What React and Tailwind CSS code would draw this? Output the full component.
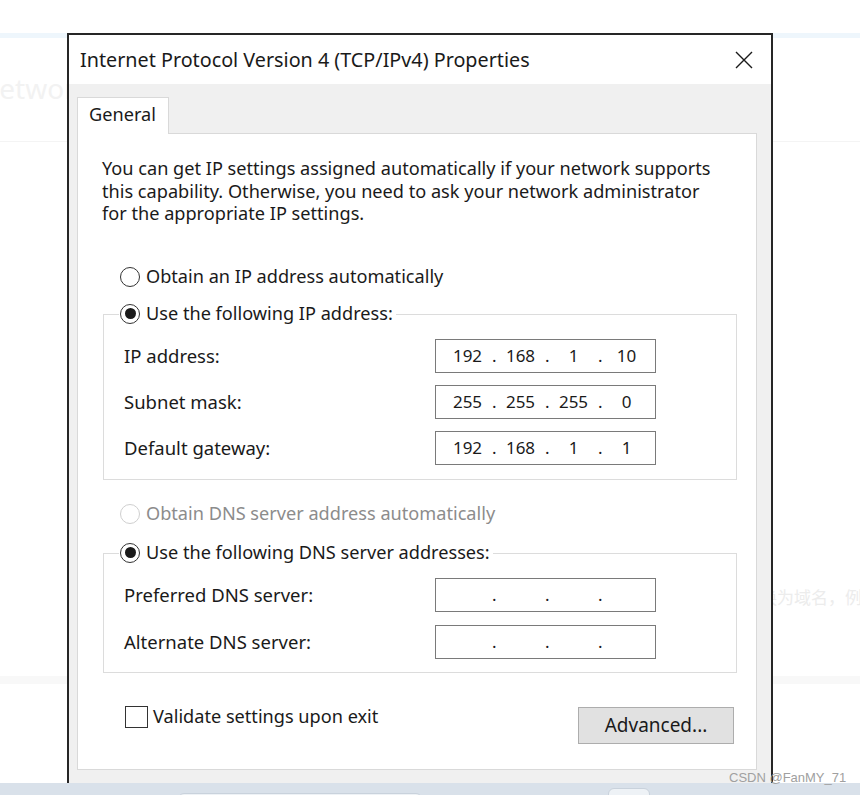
import React from "react";

function Radio({ checked, disabled }) {
  return (
    <span
      className={
        "flex h-[20px] w-[20px] shrink-0 items-center justify-center rounded-full border bg-white " +
        (disabled ? "border-[#cfcfcf]" : "border-[#333333]")
      }
    >
      {checked ? <span className="h-[11px] w-[11px] rounded-full bg-[#1a1a1a]" /> : null}
    </span>
  );
}

function IpBox({ parts }) {
  const p = parts || ["", "", "", ""];
  return (
    <div className="flex h-[34px] w-[221px] items-center border border-[#7a7a7a] bg-white pl-[7px] text-[17px]">
      <span className="w-[49px] text-center">{p[0]}</span>
      <span className="w-[4px] text-center">.</span>
      <span className="w-[49px] text-center">{p[1]}</span>
      <span className="w-[4px] text-center">.</span>
      <span className="w-[49px] text-center">{p[2]}</span>
      <span className="w-[4px] text-center">.</span>
      <span className="w-[49px] text-center">{p[3]}</span>
    </div>
  );
}

function Row({ label, parts }) {
  return (
    <div className="flex items-center pl-[20px]">
      <span className="w-[311px] text-[18.5px]">{label}</span>
      <IpBox parts={parts} />
    </div>
  );
}

function Group({ legend, children, className }) {
  return (
    <div className={"ml-[25px] w-[634px] border border-[#dcdcdc] " + (className || "")}>
      <div className="-mt-[13px] ml-[15px] flex h-[24px] w-fit items-center gap-[6px] bg-white pr-[3px] pl-[1px]">
        <Radio checked />
        <span>{legend}</span>
      </div>
      {children}
    </div>
  );
}

export default function App() {
  return (
    <div className="relative h-[795px] w-[860px] overflow-hidden bg-white font-['Noto_Sans',sans-serif] text-[#1a1a1a]">
      {/* background page */}
      <div className="flex h-full flex-col">
        <div className="h-[33px]" />
        <div className="h-[5px] bg-[#eef6fc]" />
        <div className="h-[32px]" />
        <div className="-ml-[22px] text-[28px] leading-[36px] text-[#f2f2f2]">Network</div>
        <div className="mt-[35px] h-px bg-[#f4f4f4]" />
        <div className="ml-[760px] mt-[443px] whitespace-nowrap font-['Noto_Sans_CJK_SC',sans-serif] text-[17px] leading-[24px] text-[#ececec]">
          换为域名，例如
        </div>
        <div className="mt-[67px] h-[8px] bg-[#f8f8f8]" />
        <div className="relative mt-auto h-[12px] bg-[#d9e1ea]">
          <div className="absolute left-[178px] top-[10px] h-[10px] w-[244px] rounded-t-[6px] border border-[#c9d2dc] bg-[#eef2f6]" />
          <div className="absolute left-[608px] top-[5px] h-[14px] w-[42px] rounded-t-[6px] border border-[#c9d2dc] bg-[#eef2f6]" />
        </div>
      </div>

      {/* dialog window */}
      <div className="absolute left-[67px] top-[33px] flex h-[750px] w-[706px] flex-col border-2 border-b-0 border-[#262626] bg-[#f0f0f0] text-[18.15px]">
        <div className="flex h-[49px] shrink-0 items-center justify-between bg-white pl-[11px] pr-[18px]">
          <span className="text-[19.75px]">Internet Protocol Version 4 (TCP/IPv4) Properties</span>
          <svg width="18" height="18" viewBox="0 0 18 18" className="mt-[1px]">
            <path d="M1 1 L17 17 M17 1 L1 17" stroke="#1a1a1a" strokeWidth="1.4" fill="none" />
          </svg>
        </div>
        <div className="flex flex-1 flex-col pl-[8px] pr-[14px] pt-[13px]">
          <div className="relative z-10 -mb-px flex h-[37px] w-[92px] items-center border border-b-0 border-[#d9d9d9] bg-white pl-[11px] pb-[2px]">
            General
          </div>
          <div className="flex flex-col border border-[#d9d9d9] bg-white pb-[25px]">
            <p className="pl-[24px] pt-[23px] leading-[22.5px]">
              You can get IP settings assigned automatically if your network supports
              <br />
              this capability. Otherwise, you need to ask your network administrator
              <br />
              for the appropriate IP settings.
            </p>
            <div className="ml-[42px] mt-[40px] flex h-[24px] items-center gap-[6px]">
              <Radio />
              <span>Obtain an IP address automatically</span>
            </div>
            <Group legend="Use the following IP address:" className="mt-[25px] pb-[14px]">
              <div className="mt-[13px] flex flex-col gap-[12px]">
                <Row label="IP address:" parts={["192", "168", "1", "10"]} />
                <Row label="Subnet mask:" parts={["255", "255", "255", "0"]} />
                <Row label="Default gateway:" parts={["192", "168", "1", "1"]} />
              </div>
            </Group>
            <div className="ml-[42px] mt-[22px] flex h-[24px] items-center gap-[6px] text-[#8c8c8c]">
              <Radio disabled />
              <span>Obtain DNS server address automatically</span>
            </div>
            <Group legend="Use the following DNS server addresses:" className="mt-[27px] pb-[13px]">
              <div className="mt-[13px] flex flex-col gap-[13px]">
                <Row label="Preferred DNS server:" />
                <Row label="Alternate DNS server:" />
              </div>
            </Group>
            <div className="mt-[33px] flex items-start justify-between pl-[47px] pr-[22px]">
              <div className="flex h-[22px] items-center gap-[5px]">
                <span className="h-[22px] w-[23px] border border-[#333333] bg-white" />
                <span>Validate settings upon exit</span>
              </div>
              <button className="mt-[1px] flex h-[37px] w-[156px] items-center justify-center border border-[#adadad] bg-[#e1e1e1] text-[19px] text-[#1a1a1a]">
                Advanced...
              </button>
            </div>
          </div>
        </div>
      </div>

      {/* watermark */}
      <div className="absolute left-[729px] top-[770px] whitespace-nowrap font-['Liberation_Sans',sans-serif] text-[13px] leading-[16px] text-[#a0a0a0]">
        CSDN @FanMY_71
      </div>
    </div>
  );
}
